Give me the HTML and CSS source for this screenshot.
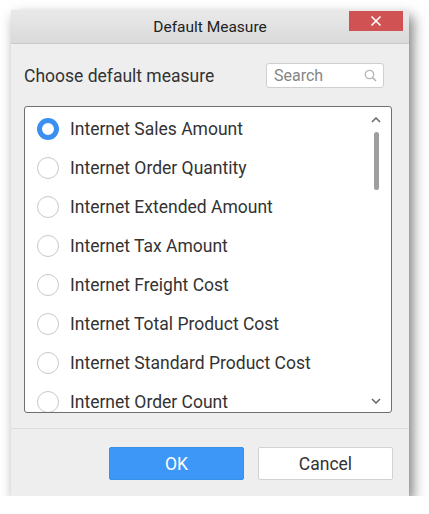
FILE: index.html
```html
<!DOCTYPE html>
<html>
<head>
<meta charset="utf-8">
<link rel="stylesheet" href="styles.css">
</head>
<body>
<div class="dialog">
  <div class="header">
    <span class="title">Default Measure</span>
    <div class="close">
      <svg width="12" height="12" viewBox="0 0 12 12"><path d="M1.5 1.5 L10.5 10.5 M10.5 1.5 L1.5 10.5" stroke="#fff" stroke-width="1.6" fill="none"/></svg>
    </div>
  </div>
  <div class="content">
    <div class="toprow">
      <span class="label">Choose default measure</span>
      <div class="search">
        <span class="placeholder">Search</span>
        <svg width="13" height="13" viewBox="0 0 13 13"><circle cx="5.5" cy="5.5" r="4.2" stroke="#b5b5b5" stroke-width="1.3" fill="none"/><path d="M8.6 8.6 L12 12" stroke="#b5b5b5" stroke-width="1.5"/></svg>
      </div>
    </div>
    <div class="list">
      <div class="items">
        <div class="item"><span class="radio checked"></span><span>Internet Sales Amount</span></div>
        <div class="item"><span class="radio"></span><span>Internet Order Quantity</span></div>
        <div class="item"><span class="radio"></span><span>Internet Extended Amount</span></div>
        <div class="item"><span class="radio"></span><span>Internet Tax Amount</span></div>
        <div class="item"><span class="radio"></span><span>Internet Freight Cost</span></div>
        <div class="item"><span class="radio"></span><span>Internet Total Product Cost</span></div>
        <div class="item"><span class="radio"></span><span>Internet Standard Product Cost</span></div>
        <div class="item"><span class="radio"></span><span>Internet Order Count</span></div>
      </div>
      <div class="scrollbar">
        <svg class="arrow" width="10" height="6" viewBox="0 0 10 6"><path d="M1 5 L5 1 L9 5" stroke="#666" stroke-width="1.5" fill="none"/></svg>
        <div class="thumb"></div>
        <div class="spacer"></div>
        <svg class="arrow" width="10" height="6" viewBox="0 0 10 6"><path d="M1 1 L5 5 L9 1" stroke="#666" stroke-width="1.5" fill="none"/></svg>
      </div>
    </div>
  </div>
  <div class="footer">
    <button class="btn ok">OK</button>
    <button class="btn cancel">Cancel</button>
  </div>
</div>
</body>
</html>
```
FILE: styles.css
```css
html, body {
  margin: 0;
  padding: 0;
  background: #ffffff;
  font-family: Roboto, "Liberation Sans", sans-serif;
  color: #333;
}
.dialog {
  margin: 10px 0 0 11px;
  width: 398px;
  height: 486px;
  background: #eeeeee;
  display: flex;
  flex-direction: column;
  box-shadow: 4px 6px 12px rgba(0,0,0,0.5);
  box-sizing: border-box;
}
.header {
  position: relative;
  height: 34px;
  box-sizing: border-box;
  border-bottom: 1px solid #c9c9c9;
  background: linear-gradient(#e9e9e9, #dadada);
  display: flex;
  align-items: center;
  justify-content: center;
}
.title {
  font-size: 15.5px;
  color: #222;
  margin-top: 1px;
}
.close {
  position: absolute;
  top: 1px;
  right: 6px;
  width: 54px;
  height: 20px;
  background: #d05252;
  display: flex;
  align-items: center;
  justify-content: center;
}
.content {
  padding: 19px 17px 0 13px;
  flex: 1;
  border-bottom: 1px solid #dcdcdc;
}
.toprow {
  display: flex;
  align-items: center;
  justify-content: space-between;
  padding-right: 8px;
  height: 25px;
}
.label {
  font-size: 17.5px;
  color: #333;
  margin-top: 1px;
}
.search {
  width: 118px;
  height: 25px;
  box-sizing: border-box;
  border: 1px solid #cfcfcf;
  border-radius: 3px;
  background: #fff;
  display: flex;
  align-items: center;
  justify-content: space-between;
  padding: 0 6px 0 7px;
}
.placeholder {
  font-size: 16px;
  color: #858585;
}
.list {
  margin-top: 18px;
  height: 307px;
  box-sizing: border-box;
  border: 1px solid #6f6f6f;
  border-radius: 3px;
  background: #fff;
  display: flex;
  overflow: hidden;
}
.items {
  flex: 1;
  padding: 2px 0 0 12px;
}
.item {
  height: 39px;
  display: flex;
  align-items: center;
  font-size: 17.5px;
  color: #333;
}
.radio {
  width: 22px;
  height: 22px;
  box-sizing: border-box;
  border: 1px solid #c9c9c9;
  border-radius: 50%;
  margin-right: 11px;
  flex: none;
}
.radio.checked {
  border: 5px solid #3b8ff0;
}
.scrollbar {
  width: 20px;
  padding: 10px 5px 8px 0;
  display: flex;
  flex-direction: column;
  align-items: center;
}
.arrow {
  flex: none;
}
.thumb {
  margin-top: 9px;
  width: 5px;
  height: 58px;
  border-radius: 3px;
  background: #9e9e9e;
}
.spacer {
  flex: 1;
}
.footer {
  display: flex;
  justify-content: flex-end;
  gap: 14px;
  padding: 18px 16px 16px 0;
}
.btn {
  width: 135px;
  height: 33px;
  border-radius: 2px;
  font-family: Roboto, "Liberation Sans", sans-serif;
  font-size: 17.5px;
  box-sizing: border-box;
}
.ok {
  background: #3d97f7;
  border: 1px solid #3a8fe8;
  color: #fff;
}
.cancel {
  background: #fff;
  border: 1px solid #d2d2d2;
  color: #333;
}
```
